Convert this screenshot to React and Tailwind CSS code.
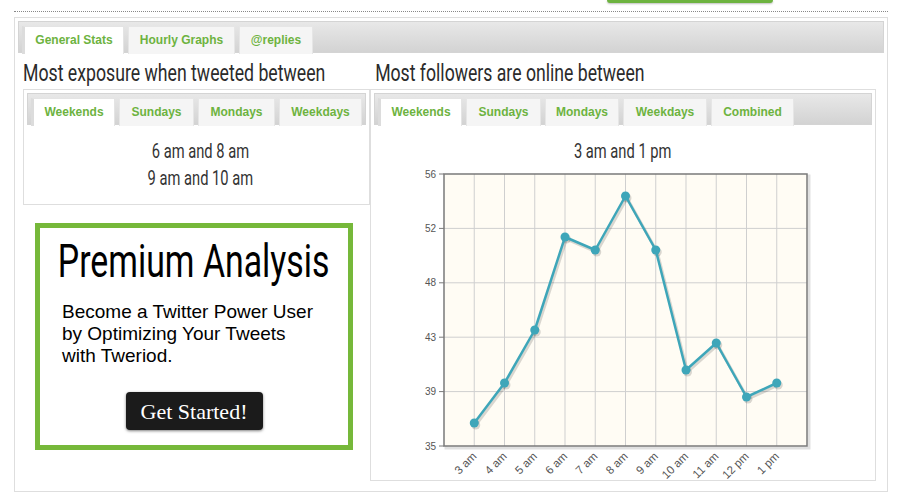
import React from 'react';

const mainTabs = [
  { label: 'General Stats', w: 'w-[102px]', active: true },
  { label: 'Hourly Graphs', w: 'w-[107px]' },
  { label: '@replies', w: 'w-[74px]' },
];

const leftTabs = [
  { label: 'Weekends', w: 'w-[84px]', active: true },
  { label: 'Sundays', w: 'w-[75px]' },
  { label: 'Mondays', w: 'w-[77px]' },
  { label: 'Weekdays', w: 'w-[83px]' },
];

const rightTabs = [
  { label: 'Weekends', w: 'w-[84px]', active: true },
  { label: 'Sundays', w: 'w-[75px]' },
  { label: 'Mondays', w: 'w-[74px]' },
  { label: 'Weekdays', w: 'w-[84px]' },
  { label: 'Combined', w: 'w-[83px]' },
];

// chart points in page pixels
const hours = ['3 am', '4 am', '5 am', '6 am', '7 am', '8 am', '9 am', '10 am', '11 am', '12 pm', '1 pm'];
const ys = [422, 382, 329, 236, 249, 195, 249, 369, 342, 396, 382];
const plot = { left: 444, right: 807, top: 173, bottom: 445 };
const step = (plot.right - plot.left) / 12;
const rowStep = (plot.bottom - plot.top) / 5;
const yLabels = ['56', '52', '48', '43', '39', '35'];

const TabBar = ({ tabs }) => (
  <div className="flex gap-[4px] h-[32px] px-[3px] pt-[4px] border border-[#d4d4d4] bg-gradient-to-b from-[#e8e8e8] to-[#d3d3d3]">
    {tabs.map((t) => (
      <div
        key={t.label}
        className={`${t.w} h-[28px] pb-[2px] flex items-center justify-center text-[12px] font-bold text-[#6db33f] border border-b-0 ${
          t.active ? 'bg-white border-[#e4e4e4] border-l-[3px] border-l-[#dcdcdc]' : 'bg-[#f5f5f5] border-[#e6e6e6]'
        }`}
      >
        {t.label}
      </div>
    ))}
  </div>
);

const Chart = () => {
  const pts = ys.map((y, i) => [plot.left + step * (i + 1), y]);
  const line = pts.map((p) => p.join(',')).join(' ');
  const shadow = pts.map(([x, y]) => `${x + 1.5},${y + 2}`).join(' ');
  return (
    <svg width="504" height="316" viewBox="371 165 504 316" className="block">
      <rect x={plot.left + 2} y={plot.top + 2} width={plot.right - plot.left} height={plot.bottom - plot.top} fill="none" stroke="rgba(0,0,0,0.12)" strokeWidth="3" />
      <rect x={plot.left} y={plot.top} width={plot.right - plot.left} height={plot.bottom - plot.top} fill="#fffcf4" />
      {[1, 2, 3, 4].map((k) => (
        <line key={'h' + k} x1={plot.left} x2={plot.right} y1={plot.top + rowStep * k} y2={plot.top + rowStep * k} stroke="#cfcfcf" strokeWidth="1" />
      ))}
      {hours.map((h, i) => (
        <line key={'v' + h} y1={plot.top} y2={plot.bottom} x1={plot.left + step * (i + 1)} x2={plot.left + step * (i + 1)} stroke="#cfcfcf" strokeWidth="1" />
      ))}
      <rect x={plot.left} y={plot.top} width={plot.right - plot.left} height={plot.bottom - plot.top} fill="none" stroke="#7a7a7a" strokeWidth="1.5" />
      {yLabels.map((l, k) => (
        <g key={l}>
          <line x1={plot.left - 5} x2={plot.left} y1={plot.top + rowStep * k} y2={plot.top + rowStep * k} stroke="#7a7a7a" strokeWidth="1" />
          <text x={plot.left - 8} y={plot.top + rowStep * k + 3.5} textAnchor="end" fontSize="10" fill="#555" fontFamily="Liberation Sans, Arial, sans-serif">
            {l}
          </text>
        </g>
      ))}
      {hours.map((h, i) => {
        const x = plot.left + step * (i + 1) + 3;
        const y = plot.bottom + 11;
        return (
          <text key={'t' + h} x={x} y={y} textAnchor="end" fontSize="11.5" fill="#555" fontFamily="Liberation Sans, Arial, sans-serif" transform={`rotate(-45 ${x} ${y})`}>
            {h}
          </text>
        );
      })}
      <polyline points={shadow} fill="none" stroke="rgba(0,0,0,0.15)" strokeWidth="3" strokeLinejoin="round" />
      {pts.map(([x, y], i) => (
        <circle key={'s' + i} cx={x + 1.5} cy={y + 2} r="4.5" fill="rgba(0,0,0,0.15)" />
      ))}
      <polyline points={line} fill="none" stroke="#3ea6b9" strokeWidth="2.5" strokeLinejoin="round" />
      {pts.map(([x, y], i) => (
        <circle key={'c' + i} cx={x} cy={y} r="4.5" fill="#3ea6b9" />
      ))}
    </svg>
  );
};

// condensed look: Roboto squeezed horizontally
const narrow = "font-['Roboto','Liberation_Sans',sans-serif] whitespace-nowrap";

export default function App() {
  return (
    <div className="w-[900px] h-[501px] bg-white overflow-hidden font-['Liberation_Sans',Arial,sans-serif]">
      {/* cut off button */}
      <div className="h-[11px]">
        <div className="ml-[607px] w-[166px] h-[3px] bg-[#6db33f] rounded-b-[3px] shadow-[0_1px_2px_rgba(0,0,0,0.25)]" />
      </div>
      <div className="ml-[14px] w-[874px] border-t border-dotted border-[#888]" />

      <div className="ml-[14px] mt-[5px] w-[874px] h-[475px] border border-[#dedede] p-[3px]">
        <TabBar tabs={mainTabs} />

        <div className="flex pl-[5px]">
          {/* left column */}
          <div className="w-[347px]">
            <h2 className={`h-[36px] pt-[7px] text-[24px] leading-[26px] text-[#2b2b2b] origin-left scale-x-[0.737] ${narrow}`}>
              Most exposure when tweeted between
            </h2>
            <div className="h-[116px] border border-[#dedede] p-[3px]">
              <TabBar tabs={leftTabs} />
              <div className="mt-[13px] pl-[8px] flex justify-center">
                <div className={`text-center text-[21px] leading-[27px] text-[#333] scale-x-[0.7] ${narrow}`}>
                  <div>6 am and 8 am</div>
                  <div>9 am and 10 am</div>
                </div>
              </div>
            </div>

            <div className="ml-[12px] mt-[18px] w-[318px] h-[227px] border-[5px] border-[#76b83a] flex flex-col">
              <div className="mt-[9px] flex justify-center">
                <div className={`text-[47px] leading-[48px] text-black scale-x-[0.72] ${narrow}`}>Premium Analysis</div>
              </div>
              <p className="mt-[16px] ml-[22px] text-[19px] leading-[22px] text-black whitespace-nowrap">
                Become a Twitter Power User
                <br />
                by Optimizing Your Tweets
                <br />
                with Tweriod.
              </p>
              <div className="mt-[25px] flex justify-center">
                <button className="w-[137px] h-[38px] bg-[#1b1b1b] rounded-[4px] shadow-[0_1px_3px_rgba(0,0,0,0.5)] text-white text-[22px] font-['Liberation_Serif',Georgia,serif]">
                  Get Started!
                </button>
              </div>
            </div>
          </div>

          {/* right column */}
          <div className="w-[506px]">
            <h2 className={`h-[36px] pt-[7px] pl-[7px] text-[24px] leading-[26px] text-[#2b2b2b] origin-left scale-x-[0.735] ${narrow}`}>
              Most followers are online between
            </h2>
            <div className="h-[392px] border border-[#dedede] p-[3px]">
              <TabBar tabs={rightTabs} />
              <div className="mt-[14px] flex justify-center">
                <div className={`text-[21px] leading-[24px] text-[#333] scale-x-[0.7] ${narrow}`}>3 am and 1 pm</div>
              </div>
              <div className="-mx-[3px] mt-[3px]">
                <Chart />
              </div>
            </div>
          </div>
        </div>
      </div>
    </div>
  );
}
